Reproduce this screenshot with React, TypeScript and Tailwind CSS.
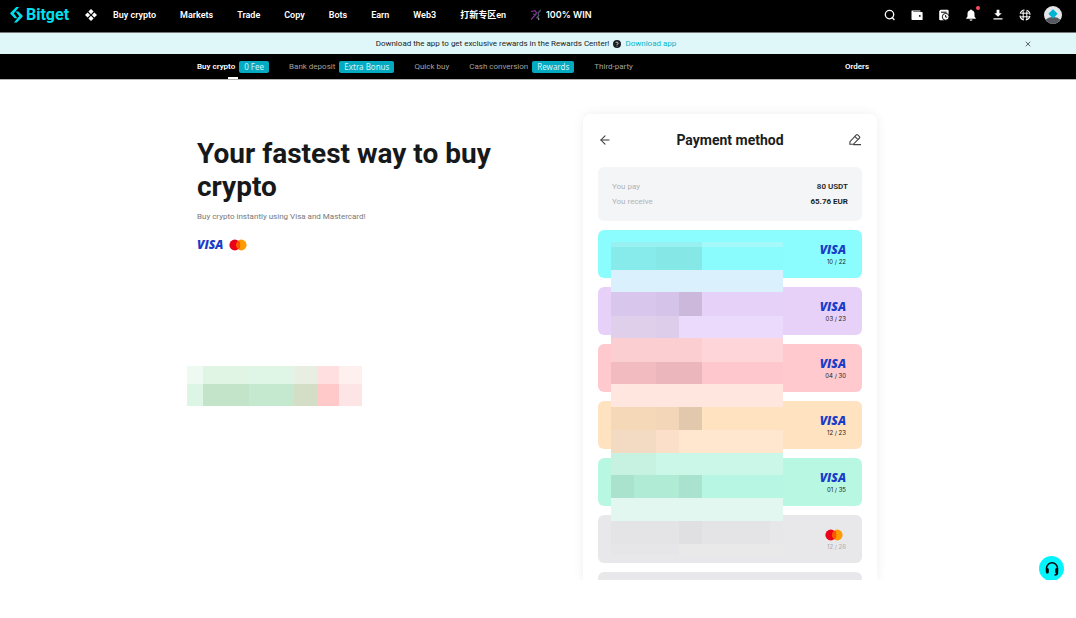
import { ArrowLeft, X } from "lucide-react";
import clsx from "clsx";

const mainLinks = ["Buy crypto", "Markets", "Trade", "Copy", "Bots", "Earn", "Web3", "打新专区en"];

const subLinks = [
  { label: "Buy crypto", badge: "0 Fee", active: true },
  { label: "Bank deposit", badge: "Extra Bonus" },
  { label: "Quick buy" },
  { label: "Cash conversion", badge: "Rewards" },
  { label: "Third-party" },
];

const cards = [
  { brand: "visa", expiry: "10 / 22", color: "bg-[#8cfdff]" },
  { brand: "visa", expiry: "03 / 23", color: "bg-[#e7d1f9]" },
  { brand: "visa", expiry: "04 / 30", color: "bg-[#ffc9ce]" },
  { brand: "visa", expiry: "12 / 23", color: "bg-[#ffe3c1]" },
  { brand: "visa", expiry: "01 / 35", color: "bg-[#b8f7e2]" },
  { brand: "mastercard", expiry: "12 / 26", color: "bg-[#e8e8ea]" },
];

// censor blocks over the card numbers: row height, then [width, colour] per block
const cardMosaic = [
  { height: "h-[5px]", cells: [["w-[91px]", "bg-[#98f0f0]"], ["w-[81px]", "bg-[#a5f9fb]"]] },
  { height: "h-[23px]", cells: [["w-[45px]", "bg-[#87ebeb]"], ["w-[46px]", "bg-[#86e7e7]"], ["w-[81px]", "bg-[#8bfcfe]"]] },
  { height: "h-[22px]", cells: [["w-[172px]", "bg-[#daf0fc]"]] },
  { height: "h-[24px]", cells: [["w-[45px]", "bg-[#d9c6ec]"], ["w-[23px]", "bg-[#d6c3e9]"], ["w-[23px]", "bg-[#cbb8da]"], ["w-[81px]", "bg-[#e6d1f8]"]] },
  { height: "h-[22px]", cells: [["w-[45px]", "bg-[#dfcfea]"], ["w-[23px]", "bg-[#ddcdeb]"], ["w-[104px]", "bg-[#ebdafb]"]] },
  { height: "h-[24px]", cells: [["w-[91px]", "bg-[#fbcfd2]"], ["w-[81px]", "bg-[#fed6da]"]] },
  { height: "h-[22px]", cells: [["w-[45px]", "bg-[#f1bbc0]"], ["w-[46px]", "bg-[#ecb7bc]"], ["w-[81px]", "bg-[#fec7cd]"]] },
  { height: "h-[23px]", cells: [["w-[172px]", "bg-[#ffe6df]"]] },
  { height: "h-[23px]", cells: [["w-[45px]", "bg-[#f5d8b8]"], ["w-[23px]", "bg-[#f3d5b8]"], ["w-[23px]", "bg-[#e2c8ac]"], ["w-[81px]", "bg-[#ffe2c0]"]] },
  { height: "h-[23px]", cells: [["w-[45px]", "bg-[#f3dac2]"], ["w-[23px]", "bg-[#fbdfc8]"], ["w-[104px]", "bg-[#ffe6ce]"]] },
  { height: "h-[22px]", cells: [["w-[45px]", "bg-[#c7f1e0]"], ["w-[127px]", "bg-[#caf7e8]"]] },
  { height: "h-[23px]", cells: [["w-[23px]", "bg-[#a9e3ce]"], ["w-[45px]", "bg-[#b0ebd6]"], ["w-[23px]", "bg-[#a9e2ce]"], ["w-[81px]", "bg-[#b7f6e2]"]] },
  { height: "h-[23px]", cells: [["w-[172px]", "bg-[#e1f7ef]"]] },
  { height: "h-[23px]", cells: [["w-[68px]", "bg-[#e4e4e6]"], ["w-[23px]", "bg-[#e0e0e2]"], ["w-[68px]", "bg-[#e4e4e6]"], ["w-[13px]", "bg-[#e7e7e9]"]] },
  { height: "h-[11px]", cells: [["w-[68px]", "bg-[#e6e6e8]"], ["w-[104px]", "bg-[#e9e9e9]"]] },
];

const buttonMosaic = [
  {
    height: "h-[18px]",
    cells: [["w-4", "bg-[#eef9f2]"], ["w-[46px]", "bg-[#e1f5e5]"], ["w-[45px]", "bg-[#dff6e6]"], ["w-[23px]", "bg-[#e8eee2]"], ["w-[22px]", "bg-[#ffdfe0]"], ["w-[23px]", "bg-[#fff0f0]"]],
  },
  {
    height: "h-[22px]",
    cells: [["w-4", "bg-[#ddf5e5]"], ["w-[46px]", "bg-[#c3e4c9]"], ["w-[45px]", "bg-[#c5e9ce]"], ["w-[23px]", "bg-[#d4ddc5]"], ["w-[22px]", "bg-[#ffc9c9]"], ["w-[23px]", "bg-[#fde5e6]"]],
  },
];

function Mosaic({ rows }: { rows: { height: string; cells: string[][] }[] }) {
  return (
    <div aria-hidden="true">
      {rows.map((row, i) => (
        <div key={i} className={clsx("flex", row.height)}>
          {row.cells.map(([width, color], j) => (
            <div key={j} className={clsx("shrink-0", width, color)} />
          ))}
        </div>
      ))}
    </div>
  );
}

function Visa() {
  return (
    <span className="font-['Open_Sans'] text-[12px] leading-3 font-extrabold italic text-[#1a3cc8]">VISA</span>
  );
}

function Mastercard() {
  return (
    <svg viewBox="0 0 18 12" className="h-3 w-[18px]" role="img" aria-label="Mastercard">
      <circle cx="12.2" cy="6" r="5.4" fill="#ff9a00" />
      <circle cx="5.8" cy="6" r="5.4" fill="#eb0019" />
      <path d="M9 1.7a5.4 5.4 0 0 1 0 8.6a5.4 5.4 0 0 1 0-8.6z" fill="#fc5a00" />
    </svg>
  );
}

function Logo() {
  return (
    <a href="#" className="flex items-center gap-[3px] text-[#00dfee]">
      <svg viewBox="0 0 13 18" className="h-[18px] w-[13px]" fill="currentColor" aria-hidden="true">
        <path d="M5.6 5.4h2.8l4.1 4.1c.4.4.4.9 0 1.3L6.8 16.6H3.900l5.300-6.400z" />
        <path d="M7.400 12.200H4.600L.5 8.100c-.4-.4-.4-.9 0-1.300L6.200 1h2.900L3.800 7.400z" />
      </svg>
      <span className="text-[16px] leading-5 font-bold">Bitget</span>
    </a>
  );
}

function HeaderIcons() {
  const button = "flex size-3 items-center justify-center";
  return (
    <div className="flex items-center gap-[15px] text-white">
      <button className={button} aria-label="Search">
        <svg viewBox="0 0 12 12" className="size-3" fill="none" stroke="currentColor" strokeWidth="1.3">
          <circle cx="5.5" cy="5.6" r="4.2" />
          <path d="M7.8 8l2.6 3" />
        </svg>
      </button>
      <button className={button} aria-label="Wallet">
        <svg viewBox="0 0 12 12" className="size-3" fill="currentColor">
          <path d="M1 1.4h8.4v1H2.2v.7H11a.6.6 0 0 1 .6.6v6.7a.6.6 0 0 1-.6.6H1.2a.7.7 0 0 1-.7-.7V2a.6.6 0 0 1 .5-.6z" />
          <circle cx="8.8" cy="6.9" r=".9" fill="#000" />
        </svg>
      </button>
      <button className={button} aria-label="Order history">
        <svg viewBox="0 0 12 12" className="size-3">
          <path d="M2.6.7h7a1 1 0 0 1 1 1V6L6 11.3H2.2a1 1 0 0 1-1-1V2.1z" fill="currentColor" />
          <path d="M3 3.2h5.6" stroke="#000" />
          <circle cx="7.7" cy="7.8" r="3.4" fill="currentColor" stroke="#000" strokeWidth=".9" />
          <path d="M7.6 6v2.1h1.6" fill="none" stroke="#000" strokeWidth=".9" />
        </svg>
      </button>
      <button className={clsx(button, "relative")} aria-label="Notifications">
        <svg viewBox="0 0 12 12" className="size-3" fill="currentColor">
          <path d="M6 .4c.6 0 .9.4.9.9 1.7.5 2.6 1.8 2.6 3.5v2.8l1.3 1.6v.6H1.2v-.6l1.3-1.6V4.8c0-1.7.9-3 2.6-3.5 0-.5.3-.9.9-.9zM4.5 10.4h3a1.5 1.3 0 0 1-3 0z" />
        </svg>
        <span className="absolute -top-[3px] -right-[3px] size-1 rounded-full bg-[#ff4d63]" />
      </button>
      <button className={button} aria-label="Download">
        <svg viewBox="0 0 12 12" className="size-3" fill="currentColor">
          <path d="M4.6.8h2.8v3.4h2.4L6 7.8 2.2 4.2h2.4zM1.5 9.3h9v1.2h-9z" />
        </svg>
      </button>
      <button className={button} aria-label="Language">
        <svg viewBox="0 0 12 12" className="size-3" fill="none" stroke="currentColor">
          <circle cx="6" cy="6" r="5" strokeWidth="1.2" strokeDasharray="5.85 2" strokeDashoffset="-1" />
          <path d="M4.2 2.2v7.6M7.8 2.2v7.6M2.2 4.2h7.6M2.2 7.8h7.6" />
        </svg>
      </button>
      <button className="-ml-0.5 size-[18px]" aria-label="Account">
        <svg viewBox="0 0 18 18" className="size-[18px]">
          <circle cx="9" cy="9" r="9" fill="#e4e7ea" />
          <path d="M1.6 14c1.5-2 4-3 7.4-3s5.900 1 7.400 3a9 9 0 0 1-14.800 0z" fill="#55595f" />
          <path d="M9 4.200l3.600 3.600L9 11.400 5.400 7.800z" fill="#00b4d4" stroke="#00b4d4" strokeWidth="1.6" strokeLinejoin="round" />
        </svg>
      </button>
    </div>
  );
}

function Header() {
  return (
    <header className="flex h-[33px] items-center justify-between border-b border-[#777] bg-black pr-3.5 pb-[3px] pl-2.5">
      <div className="flex items-center">
        <Logo />
        <button className="ml-4 text-white" aria-label="All products">
          <svg viewBox="0 0 12 12" className="size-3" fill="currentColor">
            <path d="M6 0l2.6 2.6L6 5.2 3.4 2.6zM6 6.8l2.6 2.6L6 12 3.4 9.4zM2.6 3.4L5.2 6 2.6 8.6 0 6zM9.4 3.4L12 6 9.4 8.6 6.8 6z" />
          </svg>
        </button>
        <nav className="ml-4 flex items-center gap-6 text-[9px] leading-3 font-semibold whitespace-nowrap text-white">
          {mainLinks.map((link) => (
            <a key={link} href="#">
              {link}
            </a>
          ))}
          <a href="#" className="flex items-center gap-1 font-[Inter]">
            <svg viewBox="0 0 12 12" className="size-3" fill="none" strokeWidth="1.2" aria-hidden="true">
              <path d="M1 2.5l4-.8 1.5 2L4.5 7 1 10.5" stroke="#8b2fa0" />
              <path d="M10.8 1L8 4l.8 2.5L6.5 9M3 5l3.5 1" stroke="#4d5a6b" />
              <path d="M8 8.5l1 2.5" stroke="#8f9aa5" />
            </svg>
            100% WIN
          </a>
        </nav>
      </div>
      <HeaderIcons />
    </header>
  );
}

function Banner() {
  return (
    <div className="flex h-[21px] items-center bg-[#e0f7fa] pr-11 text-[8px] leading-3 text-[#1b1d22]">
      <p className="flex flex-1 items-center justify-center gap-1 pl-7">
        Download the app to get exclusive rewards in the Rewards Center!
        <svg viewBox="0 0 8 8" className="size-2" aria-hidden="true">
          <circle cx="4" cy="4" r="4" fill="#1b1d22" />
          <path d="M2.8 3a1.2 1.1 0 1 1 1.2 1.3v.7M4 5.7v.8" fill="none" stroke="#e0f7fa" strokeWidth=".7" />
        </svg>
        <a href="#" className="text-[#03b5c9]">
          Download app
        </a>
      </p>
      <button aria-label="Close">
        <X className="size-2" strokeWidth={2} />
      </button>
    </div>
  );
}

function SubNav() {
  return (
    <div className="border-b border-[#b5b5b5] bg-black">
      <div className="mx-auto flex h-[25px] max-w-[682px] items-center justify-between pr-2.5 text-[8px] leading-3 whitespace-nowrap">
        <nav className="flex h-full items-center gap-5 text-[#a2a2a2]">
          {subLinks.map((link) => (
            <a
              key={link.label}
              href="#"
              className={clsx("relative flex h-full items-center gap-1", link.active && "font-semibold text-white")}
            >
              {link.label}
              {link.badge && (
                <span className="rounded-xs bg-[#03aac1] px-[5px] font-['Noto_Sans'] font-normal text-[#d4f5f8]">
                  {link.badge}
                </span>
              )}
              {link.active && <span className="absolute bottom-0 left-1/2 h-0.5 w-2.5 -translate-x-1/2 bg-white" />}
            </a>
          ))}
        </nav>
        <a href="#" className="font-semibold text-white">
          Orders
        </a>
      </div>
    </div>
  );
}

function Hero() {
  return (
    <div className="w-[310px] pt-[23px]">
      <h1 className="text-[28px] leading-[33px] font-bold text-[#17181a]">Your fastest way to buy crypto</h1>
      <p className="mt-2 text-[8px] leading-3 text-[#777]">Buy crypto instantly using Visa and Mastercard!</p>
      <div className="mt-4 flex items-center gap-1.5">
        <Visa />
        <Mastercard />
      </div>
      <div className="mt-[115px] -ml-2.5">
        <Mosaic rows={buttonMosaic} />
      </div>
    </div>
  );
}

function PaymentPanel() {
  return (
    <div className="w-[294px] rounded-t-lg bg-white px-[15px] pt-4 shadow-[0_0_12px_rgba(0,0,0,0.07)]">
      <div className="flex h-5 items-center justify-between">
        <button aria-label="Back">
          <ArrowLeft className="size-3.5 text-[#333]" strokeWidth={1.8} />
        </button>
        <h2 className="text-[14px] leading-5 font-bold text-[#1b1d20]">Payment method</h2>
        <button aria-label="Edit">
          <svg viewBox="0 0 14 14" className="size-3.5 text-[#444]" fill="none" stroke="currentColor" strokeWidth="1.1">
            <path d="M2 8.7L8.3 1.9a1 1 0 0 1 1.4 0l1.8 1.7a1 1 0 0 1 0 1.4L5.3 11.3H1.8zM7 3.6l3 3M5.3 11.6H13" />
          </svg>
        </button>
      </div>

      <dl className="mt-[17px] rounded-md bg-[#f4f5f7] px-3.5 py-3 text-[8px] leading-[15px]">
        <div className="flex justify-between">
          <dt className="text-[#b0b3b8]">You pay</dt>
          <dd className="font-semibold text-[#1b1d20]">80 USDT</dd>
        </div>
        <div className="flex justify-between">
          <dt className="text-[#b0b3b8]">You receive</dt>
          <dd className="font-bold text-[#1b1d20]">65.76 EUR</dd>
        </div>
      </dl>

      <div className="relative mt-[9px]">
        <ul className="flex flex-col gap-[9px]">
          {cards.map((card) => (
            <li key={card.expiry} className={clsx("flex h-12 flex-col items-end justify-center rounded-md pt-1 pr-4", card.color)}>
              {card.brand === "visa" ? (
                <Visa />
              ) : (
                <span className="mr-[3px] flex">
                  <Mastercard />
                </span>
              )}
              <span
                className={clsx("font-[Inter] text-[6px] leading-3", card.brand === "visa" ? "text-[#222]" : "text-[#aaa]")}
              >
                {card.expiry}
              </span>
            </li>
          ))}
          <li className="h-2 rounded-t-md bg-[#e8e8ea]" />
        </ul>
        <div className="absolute top-3 left-[13px]">
          <Mosaic rows={cardMosaic} />
        </div>
      </div>
    </div>
  );
}

export default function App() {
  return (
    <div className="bg-white font-[Roboto,'Noto_Sans_CJK_SC',sans-serif]">
      <Header />
      <Banner />
      <SubNav />
      <main className="relative overflow-hidden pt-[34px]">
        <div className="mx-auto flex max-w-[682px] items-start justify-between pr-0.5">
          <Hero />
          <PaymentPanel />
        </div>
        <button
          className="absolute right-3 -bottom-px flex size-[25px] items-center justify-center rounded-full bg-[#03f4fc] text-black"
          aria-label="Support"
        >
          <svg viewBox="0 0 16 16" className="size-4" fill="none" stroke="currentColor" strokeWidth="1.5">
            <path d="M2.5 8.5V7.3a5.5 5.5 0 0 1 11 0v1.2M13.5 11.500c0 1.500-1 2.500-3 2.500" />
            <path d="M3.3 8.500v2.500M12.700 8.500v2.500" strokeWidth="3" strokeLinecap="round" />
          </svg>
        </button>
      </main>
    </div>
  );
}
